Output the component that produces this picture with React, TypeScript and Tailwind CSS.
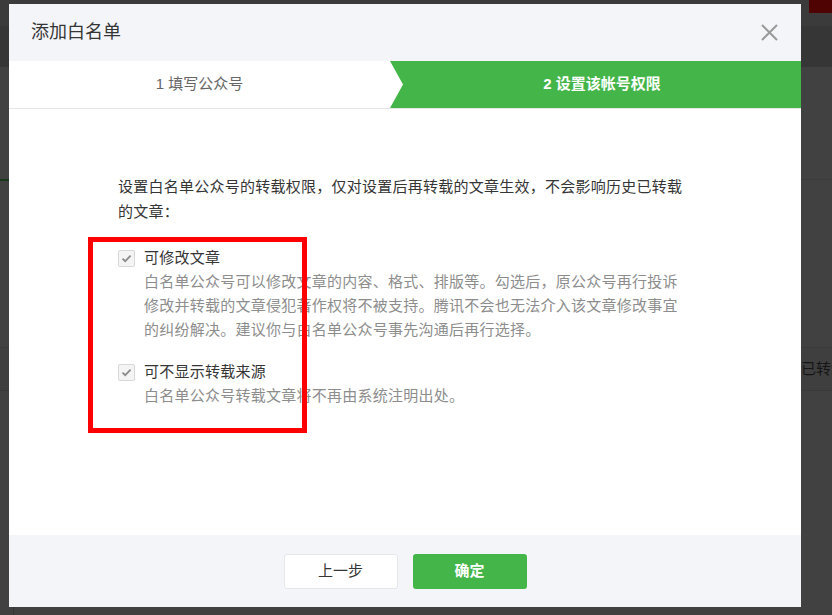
import React from 'react';

const font = { fontFamily: '"Liberation Sans", "Noto Sans CJK SC", sans-serif' };

// 勾选状态的小方框
function CheckBox() {
  return (
    <span className="flex h-[17px] w-[17px] shrink-0 items-center justify-center rounded-[2px] border border-[#d7d8da] bg-[#f4f4f4]">
      <svg width="11" height="9" viewBox="0 0 11 9" fill="none">
        <path d="M1.5 4.6 L4.2 7.2 L9.6 1.6" stroke="#8a8a8a" strokeWidth="1.8" />
      </svg>
    </span>
  );
}

function Option({ title, desc }: { title: string; desc: string }) {
  return (
    <div>
      <label className="flex items-center gap-[9px] leading-[24px] text-[#353535]">
        <CheckBox />
        <span>{title}</span>
      </label>
      <p className="pl-[26px] leading-[24px] text-[#8d8d8d]">{desc}</p>
    </div>
  );
}

export default function App() {
  return (
    <div className="relative h-[615px] w-[832px] overflow-hidden bg-[#414141]" style={font}>
      {/* 遮罩下面的页面 */}
      <div className="flex h-full flex-col">
        <div className="flex h-[26px] justify-end bg-[#3b3b3b]">
          <div className="h-[13px] w-[23px] bg-[#4f0303]" />
        </div>
        <div className="h-[41px] bg-[#363636]" />
        <div className="h-[112px]" />
        <div className="flex h-px">
          <div className="h-[2px] w-[9px] bg-[#17361a]" />
          <div className="flex-1 bg-[#3a3a3a]" />
        </div>
        <div className="h-[167px]" />
        <div className="flex h-[44px] items-center justify-end border-y border-[#3a3a3a] bg-[#3f3f3f]">
          <span className="w-[31px] overflow-hidden whitespace-nowrap text-[15px] text-[#151515]">已转载</span>
        </div>
        <div className="flex-1" />
        <div className="flex h-[8px] pl-[13px]">
          <div className="w-px bg-[#363636]" />
        </div>
      </div>

      {/* 弹窗 */}
      <div className="absolute left-[9px] top-[4px] flex h-[603px] w-[792px] flex-col bg-white">
        <div className="flex h-[57px] shrink-0 items-center justify-between bg-[#f4f5f9] pl-[22px] pr-[23px]">
          <h3 className="text-[18px] text-[#353535]">添加白名单</h3>
          <svg width="17" height="17" viewBox="0 0 17 17">
            <path d="M1 1 L16 16 M16 1 L1 16" stroke="#9a9a9a" strokeWidth="2" />
          </svg>
        </div>

        <div className="flex h-[48px] shrink-0 border-b border-[#e7e7eb] text-[15px]">
          <div className="flex flex-1 items-center justify-center text-[#666]">1 填写公众号</div>
          <div className="flex w-[411px] items-center justify-center bg-[#44b549] pl-[13px] font-bold text-white [clip-path:polygon(0_0,100%_0,100%_100%,0_100%,13px_50%)]">
            2 设置该帐号权限
          </div>
        </div>

        <div className="flex-1 pl-[109px] pt-[65px] text-[15px] tracking-[0.25px]">
          <div className="w-[572px]">
            <p className="leading-[25px] text-[#353535]">
              设置白名单公众号的转载权限，仅对设置后再转载的文章生效，不会影响历史已转载的文章：
            </p>
            <div className="mt-[22px] flex flex-col gap-[18px]">
              <Option
                title="可修改文章"
                desc="白名单公众号可以修改文章的内容、格式、排版等。勾选后，原公众号再行投诉修改并转载的文章侵犯著作权将不被支持。腾讯不会也无法介入该文章修改事宜的纠纷解决。建议你与白名单公众号事先沟通后再行选择。"
              />
              <Option title="可不显示转载来源" desc="白名单公众号转载文章将不再由系统注明出处。" />
            </div>
          </div>
        </div>

        <div className="flex h-[72px] shrink-0 items-center justify-center gap-[15px] bg-[#f4f5f9] text-[15px]">
          <button className="h-[35px] w-[114px] rounded-[3px] border border-[#e4e8eb] bg-white text-[#353535]">上一步</button>
          <button className="h-[35px] w-[114px] rounded-[3px] bg-[#44b549] font-bold text-white">确定</button>
        </div>
      </div>

      {/* 红色标注框 */}
      <div className="absolute left-[88px] top-[237px] h-[196px] w-[219px] border-[5px] border-[#ff0000]" />
    </div>
  );
}
